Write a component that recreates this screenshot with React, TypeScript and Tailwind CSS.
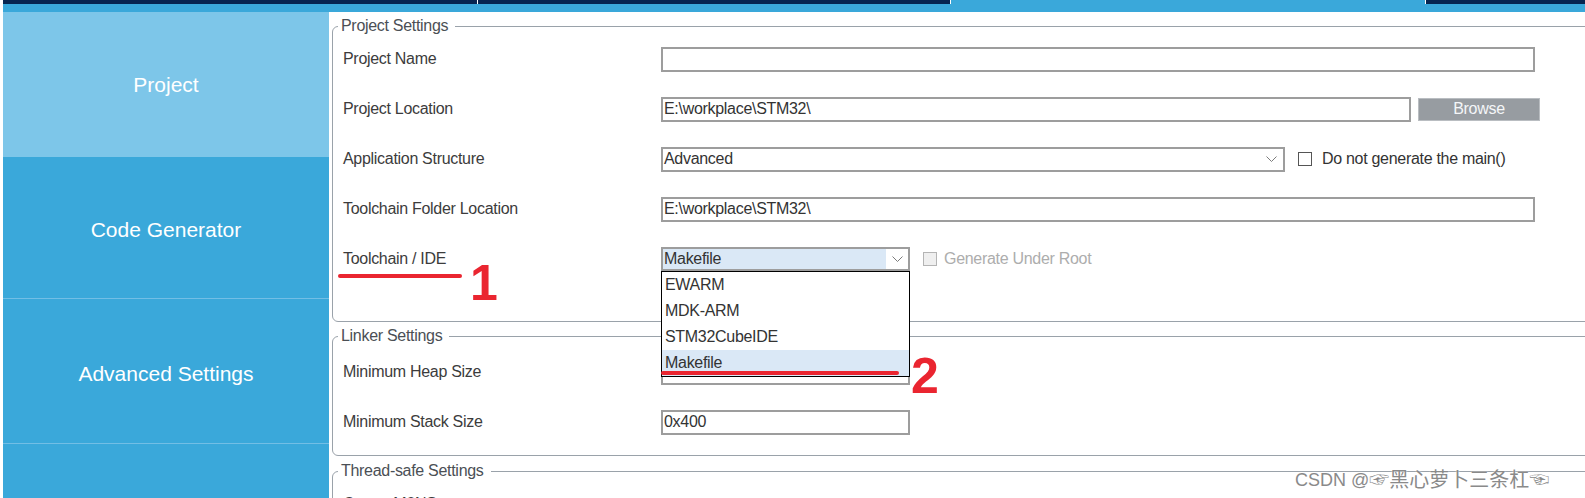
import React from 'react';

const sans = "font-['Liberation_Sans',Arial,sans-serif]";

function Chevron() {
  return (
    <svg width="11" height="6" viewBox="0 0 11 6" fill="none">
      <polyline points="0.5,0.5 5.5,5.5 10.5,0.5" stroke="#7b7b7b" strokeWidth="1" />
    </svg>
  );
}

function Row({ label, children }: { label: string; children?: React.ReactNode }) {
  return (
    <div className="flex h-[50px] items-center pl-[10px]">
      <span className="w-[318px] shrink-0 text-[16px] tracking-[-0.3px] text-[#3c3c3c]">{label}</span>
      {children}
    </div>
  );
}

function TextBox({ value = '', width }: { value?: string; width: string }) {
  return (
    <div className={`${width} flex h-[25px] items-center border-2 border-[#9d9d9d] bg-white pl-[1px] text-[16px] tracking-[-0.3px] text-[#333]`}>
      {value}
    </div>
  );
}

function Group({ title, className = '', children }: { title: string; className?: string; children: React.ReactNode }) {
  return (
    <fieldset className={`-mr-[20px] ml-[3px] rounded-[6px] border border-[#9aa2aa] ${className}`}>
      <legend className="ml-[5px] pl-[3px] pr-[7px] text-[16px] leading-[16px] tracking-[-0.3px] text-[#4b4f55]">{title}</legend>
      {children}
    </fieldset>
  );
}

const tabs = ['Project', 'Code Generator', 'Advanced Settings', ''];

export default function App() {
  return (
    <div className={`${sans} flex h-[498px] w-full flex-col overflow-hidden bg-white pl-[3px]`}>
      {/* top tab strip */}
      <div className="flex h-[4px] shrink-0">
        <div className="w-[474px] bg-[#062550]" />
        <div className="w-px bg-white" />
        <div className="w-[472px] bg-[#062550]" />
        <div className="w-px bg-white" />
        <div className="w-[474px] bg-[#3aa8da]" />
        <div className="w-px bg-white" />
        <div className="flex-1 bg-[#062550]" />
      </div>
      <div className="h-[8px] shrink-0 bg-[#3aa8da]" />

      <div className="flex min-h-0 flex-1">
        {/* sidebar */}
        <nav className="flex w-[326px] shrink-0 flex-col bg-[#3aa8da] text-[21px] text-white">
          <div className="flex h-[145px] items-center justify-center bg-[#7dc6e9]">{tabs[0]}</div>
          <div className="flex h-[141px] items-center justify-center pt-[4px]">{tabs[1]}</div>
          <div className="h-px bg-[#72bee5]" />
          <div className="flex h-[144px] items-center justify-center pt-[6px]">{tabs[2]}</div>
          <div className="h-px bg-[#72bee5]" />
          <div className="flex-1" />
        </nav>

        {/* settings */}
        <main className="relative min-w-0 flex-1 overflow-hidden">
          <Group title="Project Settings" className="mt-[6px] pb-[37px]">
            <Row label="Project Name">
              <TextBox width="w-[874px]" />
            </Row>
            <Row label="Project Location">
              <TextBox width="w-[750px]" value="E:\workplace\STM32\" />
              <div className="ml-[7px] flex h-[23px] w-[122px] items-center justify-center border border-[#b9bdc1] bg-[#979ca1] text-[16px] tracking-[-0.3px] text-[#f4f6f8]">
                Browse
              </div>
            </Row>
            <Row label="Application Structure">
              <div className="flex h-[25px] w-[624px] items-center border-2 border-[#9d9d9d] bg-white text-[16px] tracking-[-0.3px] text-[#333]">
                <span className="flex-1 pl-[1px]">Advanced</span>
                <span className="flex w-[24px] justify-center">
                  <Chevron />
                </span>
              </div>
              <span className="ml-[13px] h-[14px] w-[14px] border-[1.5px] border-[#555] bg-white" />
              <span className="ml-[10px] text-[16px] tracking-[-0.3px] text-[#333]">Do not generate the main()</span>
            </Row>
            <Row label="Toolchain Folder Location">
              <TextBox width="w-[874px]" value="E:\workplace\STM32\" />
            </Row>
            <Row label="Toolchain / IDE">
              <div className="relative h-[24px] w-[249px]">
                <div className="flex h-full items-stretch border-2 border-[#9d9d9d] text-[16px] tracking-[-0.3px] text-[#333]">
                  <span className="flex flex-1 items-center bg-[#dae8f6] pl-[1px]">Makefile</span>
                  <span className="flex w-[22px] items-center justify-center bg-white">
                    <Chevron />
                  </span>
                </div>
                {/* open list */}
                <ul className="absolute left-0 top-[24px] z-10 w-[249px] border border-black bg-white text-[16px] tracking-[-0.3px] text-[#333]">
                  <li className="flex h-[26px] items-center pl-[3px]">EWARM</li>
                  <li className="flex h-[26px] items-center pl-[3px]">MDK-ARM</li>
                  <li className="flex h-[26px] items-center pl-[3px]">STM32CubeIDE</li>
                  <li className="flex h-[26px] items-center bg-[#dae8f6] pl-[3px]">Makefile</li>
                </ul>
              </div>
              <span className="ml-[13px] h-[14px] w-[14px] border border-[#b4b4b4] bg-[#efefef]" />
              <span className="ml-[7px] text-[16px] tracking-[-0.3px] text-[#adadad]">Generate Under Root</span>
            </Row>
          </Group>

          <Group title="Linker Settings" className="mt-[6px] pb-[8px] pt-[3px]">
            <Row label="Minimum Heap Size">
              <TextBox width="w-[249px]" />
            </Row>
            <Row label="Minimum Stack Size">
              <TextBox width="w-[249px]" value="0x400" />
            </Row>
          </Group>

          <Group title="Thread-safe Settings" className="mt-[7px]">
            <Row label="Cortex-M0NS" />
          </Group>

          {/* red annotations */}
          <div className="absolute left-[9px] top-[262px] z-20 h-[4px] w-[124px] rounded-full bg-[#ea2530]" />
          <div className="absolute left-[141px] top-[246px] z-20 text-[50px] font-bold leading-none text-[#ea2530]">1</div>
          <div className="absolute left-[332px] top-[359px] z-20 h-[4px] w-[238px] rounded-full bg-[#ea2530]" />
          <div className="absolute left-[582px] top-[339px] z-20 text-[50px] font-bold leading-none text-[#ea2530]">2</div>

          {/* watermark */}
          <div className="absolute left-[966px] top-[458px] z-20 flex items-center whitespace-nowrap font-['Liberation_Sans','Noto_Sans_CJK_SC','DejaVu_Sans',sans-serif] text-[18px] leading-[20px] text-[#8a8a8a] [text-shadow:0_0_2px_#fff]">
            <span>CSDN @</span>
            <span className="text-[20px]">☞黑心萝卜三条杠☜</span>
          </div>
        </main>
      </div>
    </div>
  );
}
